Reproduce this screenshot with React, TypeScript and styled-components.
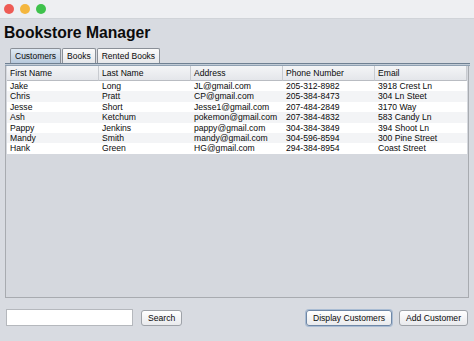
import React from "react";
import styled, { createGlobalStyle } from "styled-components";

const GlobalStyle = createGlobalStyle`
  html, body {
    margin: 0;
    padding: 0;
    background: #d8dbe1;
  }
  * {
    box-sizing: border-box;
  }
`;

const uiFont = `"Liberation Sans", Arial, sans-serif`;

const Window = styled.div`
  width: 474px;
  height: 341px;
  display: flex;
  flex-direction: column;
  background: #d8dbe1;
  font-family: ${uiFont};
  color: #0a0a0a;
  overflow: hidden;
`;

const TitleBar = styled.div`
  height: 19px;
  flex: none;
  display: flex;
  align-items: center;
  gap: 6px;
  padding-left: 4px;
  background: #eeeff2;
  border-bottom: 1px solid #d0d3d8;
`;

const Light = styled.span<{ $color: string }>`
  width: 10px;
  height: 10px;
  border-radius: 50%;
  background: ${p => p.$color};
`;

const Heading = styled.h1`
  margin: 5px 0 0 4px;
  font-family: "Liberation Sans", Arial, sans-serif;
  font-size: 15.7px;
  font-weight: 700;
  line-height: 18px;
  color: #0c0c0c;
`;

const TabStrip = styled.div`
  display: flex;
  margin: 6px 0 0 10px;
  height: 15px;
`;

const Tab = styled.div<{ $active?: boolean }>`
  height: 15px;
  padding: 0 4px;
  margin-right: 1px;
  display: flex;
  align-items: center;
  font-size: 8.5px;
  border: 1px solid #8a8f97;
  border-bottom: none;
  border-radius: 2px 2px 0 0;
  background: ${p =>
    p.$active
      ? "linear-gradient(#dfe9f3, #b7c9dc)"
      : "linear-gradient(#fbfbfb, #e6e7ea)"};
`;

const TabRule = styled.div`
  margin: 0 4px 0 5px;
  height: 3px;
  border-top: 1px solid #6f8092;
  border-bottom: 1px solid #8fa0b2;
  background: #c1cbd6;
`;

const TablePanel = styled.div`
  flex: 1;
  margin: 0 5px;
  border: 1px solid #a8abb0;
  border-top: none;
  background: #d5d8de;
  display: flex;
  flex-direction: column;
`;

const Table = styled.div`
  display: grid;
  grid-template-columns: repeat(5, 1fr);
  margin: 0 1px;
  background: #fff;
`;

const HeaderCell = styled.div`
  height: 15px;
  padding-left: 3px;
  display: flex;
  align-items: center;
  font-size: 8.6px;
  background: linear-gradient(#f4f5f7, #e4e6ea);
  border-bottom: 1px solid #b9bcc2;
  border-right: 1px solid #c8cbd0;
  &:last-child {
    border-right: none;
  }
`;

const Cell = styled.div<{ $alt: boolean }>`
  height: 10.4px;
  padding-left: 3px;
  font-size: 8.6px;
  line-height: 10.4px;
  white-space: nowrap;
  overflow: hidden;
  background: ${p => (p.$alt ? "#f3f4f6" : "#ffffff")};
`;

const BottomBar = styled.div`
  height: 43px;
  flex: none;
  display: flex;
  align-items: center;
  padding: 0 6px 4px 6px;
`;

const SearchField = styled.input`
  width: 127px;
  height: 17px;
  border: 1px solid #b5b8bd;
  background: #fff;
  outline: none;
  margin-right: 8px;
`;

const Button = styled.button<{ $focused?: boolean }>`
  height: 16px;
  padding: 0 6px;
  font-family: ${uiFont};
  font-size: 8.6px;
  color: #0a0a0a;
  border-radius: 3px;
  border: 1px solid ${p => (p.$focused ? "#6f87a6" : "#9ea2a8")};
  background: linear-gradient(#ffffff, #e9eaed);
  box-shadow: ${p => (p.$focused ? "0 0 0 1px #a9bcd3" : "none")};
`;

const ActionGroup = styled.div`
  margin-left: auto;
  display: flex;
  gap: 7px;
`;

const columns = ["First Name", "Last Name", "Address", "Phone Number", "Email"];

const customers = [
  ["Jake", "Long", "JL@gmail.com", "205-312-8982", "3918 Crest Ln"],
  ["Chris", "Pratt", "CP@gmail.com", "205-384-8473", "304 Ln Steet"],
  ["Jesse", "Short", "Jesse1@gmail.com", "207-484-2849", "3170 Way"],
  ["Ash", "Ketchum", "pokemon@gmail.com", "207-384-4832", "583 Candy Ln"],
  ["Pappy", "Jenkins", "pappy@gmail.com", "304-384-3849", "394 Shoot Ln"],
  ["Mandy", "Smith", "mandy@gmail.com", "304-596-8594", "300 Pine Street"],
  ["Hank", "Green", "HG@gmail.com", "294-384-8954", "Coast Street"],
];

export default function App() {
  return (
    <Window>
      <GlobalStyle />
      <TitleBar>
        <Light $color="#ee5b55" />
        <Light $color="#f4b63e" />
        <Light $color="#3fc24c" />
      </TitleBar>
      <Heading>Bookstore Manager</Heading>
      <TabStrip>
        <Tab $active>Customers</Tab>
        <Tab>Books</Tab>
        <Tab>Rented Books</Tab>
      </TabStrip>
      <TabRule />
      <TablePanel>
        <Table>
          {columns.map(c => (
            <HeaderCell key={c}>{c}</HeaderCell>
          ))}
          {customers.map((row, i) =>
            row.map((v, j) => (
              <Cell key={`${i}-${j}`} $alt={i % 2 === 1}>
                {v}
              </Cell>
            ))
          )}
        </Table>
      </TablePanel>
      <BottomBar>
        <SearchField />
        <Button>Search</Button>
        <ActionGroup>
          <Button $focused>Display Customers</Button>
          <Button>Add Customer</Button>
        </ActionGroup>
      </BottomBar>
    </Window>
  );
}
